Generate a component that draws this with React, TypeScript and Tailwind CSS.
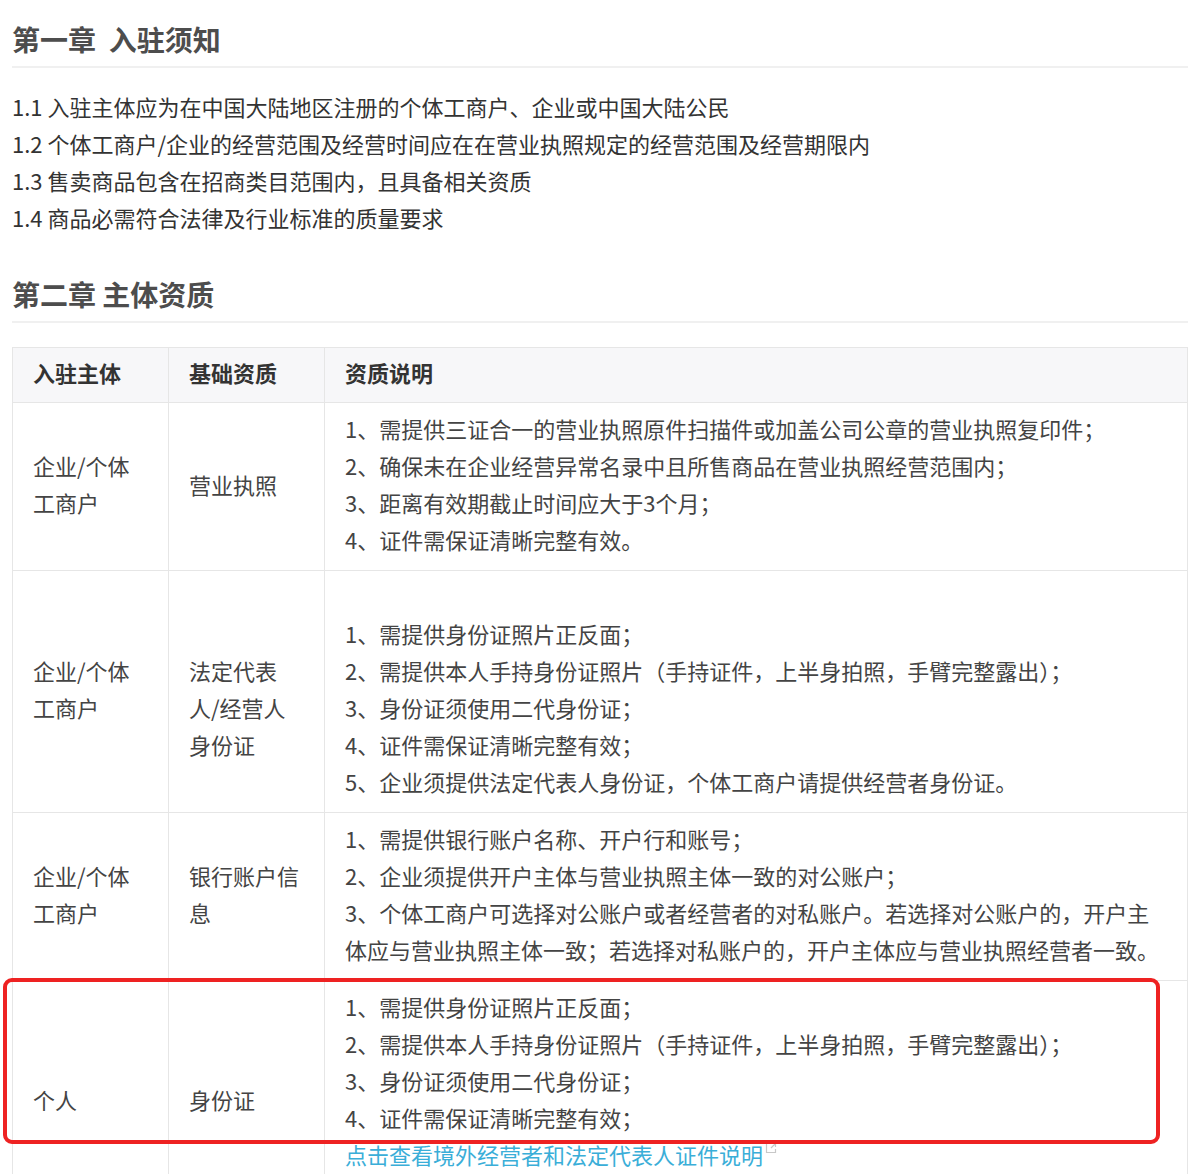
const font = { fontFamily: '"Noto Sans CJK SC", "Noto Sans", sans-serif' };

const rules = [
  "1.1 入驻主体应为在中国大陆地区注册的个体工商户、企业或中国大陆公民",
  "1.2 个体工商户/企业的经营范围及经营时间应在在营业执照规定的经营范围及经营期限内",
  "1.3 售卖商品包含在招商类目范围内，且具备相关资质",
  "1.4 商品必需符合法律及行业标准的质量要求",
];

type Row = { who: string[]; base: string[]; desc: string[] };

const rows: Row[] = [
  {
    who: ["企业/个体", "工商户"],
    base: ["营业执照"],
    desc: [
      "1、需提供三证合一的营业执照原件扫描件或加盖公司公章的营业执照复印件；",
      "2、确保未在企业经营异常名录中且所售商品在营业执照经营范围内；",
      "3、距离有效期截止时间应大于3个月；",
      "4、证件需保证清晰完整有效。",
    ],
  },
  {
    who: ["企业/个体", "工商户"],
    base: ["", "法定代表", "人/经营人", "身份证"],
    desc: [
      "",
      "1、需提供身份证照片正反面；",
      "2、需提供本人手持身份证照片（手持证件，上半身拍照，手臂完整露出）；",
      "3、身份证须使用二代身份证；",
      "4、证件需保证清晰完整有效；",
      "5、企业须提供法定代表人身份证，个体工商户请提供经营者身份证。",
    ],
  },
  {
    who: ["企业/个体", "工商户"],
    base: ["银行账户信", "息"],
    desc: [
      "1、需提供银行账户名称、开户行和账号；",
      "2、企业须提供开户主体与营业执照主体一致的对公账户；",
      "3、个体工商户可选择对公账户或者经营者的对私账户。若选择对公账户的，开户主",
      "体应与营业执照主体一致；若选择对私账户的，开户主体应与营业执照经营者一致。",
    ],
  },
];

function Lines({ lines }: { lines: string[] }) {
  return (
    <>
      {lines.map((l, i) => (
        <div key={i} className="h-[37px] whitespace-nowrap">
          {l || "\u00a0"}
        </div>
      ))}
    </>
  );
}

function Cell({ children, wide }: { children: React.ReactNode; wide?: boolean }) {
  return (
    <div
      className={`${wide ? "flex-1" : "w-[156px] shrink-0 border-r border-[#e6e6e6]"} pl-[20px] pr-[21px] pt-[7px] pb-[12px] flex flex-col justify-center`}
    >
      {children}
    </div>
  );
}

export default function App() {
  return (
    <div className="relative w-[1190px] h-[1174px] overflow-hidden bg-white text-[#333] text-[22px] leading-[37px]" style={font}>
      <div className="pl-3 pr-[2px]">
        <h1 className="pt-[20px] pb-[8px] text-[28px] leading-[38px] font-bold text-[#4d4d4d] border-b-2 border-[#f0f0f0] whitespace-pre">
          第一章  入驻须知
        </h1>
        <div className="pt-[20px]">
          {rules.map((r) => (
            <div key={r} className="h-[37px] whitespace-nowrap">
              {r}
            </div>
          ))}
        </div>
        <h2 className="pt-[39px] pb-[8px] text-[28px] leading-[38px] font-bold text-[#4d4d4d] border-b-2 border-[#f0f0f0]">
          第二章 主体资质
        </h2>
        <div className="mt-[24px] border border-[#e6e6e6]">
          <div className="flex bg-[#f7f7f9] border-b border-[#e6e6e6] font-bold text-[#333] h-[55px]">
            <div className="w-[156px] shrink-0 border-r border-[#e6e6e6] pl-[20px] pb-[6px] flex items-center">入驻主体</div>
            <div className="w-[156px] shrink-0 border-r border-[#e6e6e6] pl-[20px] pb-[6px] flex items-center">基础资质</div>
            <div className="flex-1 pl-[20px] pb-[6px] flex items-center">资质说明</div>
          </div>
          {rows.map((row, i) => (
            <div key={i} className="flex border-b border-[#e6e6e6] text-[#444]">
              <Cell>
                <Lines lines={row.who} />
              </Cell>
              <Cell>
                <Lines lines={row.base} />
              </Cell>
              <Cell wide>
                <Lines lines={row.desc} />
              </Cell>
            </div>
          ))}
          <div className="flex text-[#444]">
            <Cell>
              <Lines lines={["个人"]} />
            </Cell>
            <Cell>
              <Lines lines={["身份证"]} />
            </Cell>
            <Cell wide>
              <Lines
                lines={[
                  "1、需提供身份证照片正反面；",
                  "2、需提供本人手持身份证照片（手持证件，上半身拍照，手臂完整露出）；",
                  "3、身份证须使用二代身份证；",
                  "4、证件需保证清晰完整有效；",
                ]}
              />
              <div className="h-[37px] whitespace-nowrap text-[#3aaed8] flex items-start">
                <span>点击查看境外经营者和法定代表人证件说明</span>
                <svg width="12" height="12" viewBox="0 0 12 12" className="ml-[2px] mt-[6px]" fill="none" stroke="#c8c8c8" strokeWidth="1.2">
                  <path d="M5 1.5H1.5v9h9V7" />
                  <path d="M7 1.5h3.5V5M10.5 1.5 6 6" />
                </svg>
              </div>
              <div className="h-[37px]">{"\u00a0"}</div>
            </Cell>
          </div>
        </div>
      </div>
      {/* red annotation box */}
      <div className="absolute left-[3px] top-[978px] w-[1157px] h-[166px] border-[4px] border-[#ee2222] rounded-[9px] pointer-events-none" />
    </div>
  );
}
